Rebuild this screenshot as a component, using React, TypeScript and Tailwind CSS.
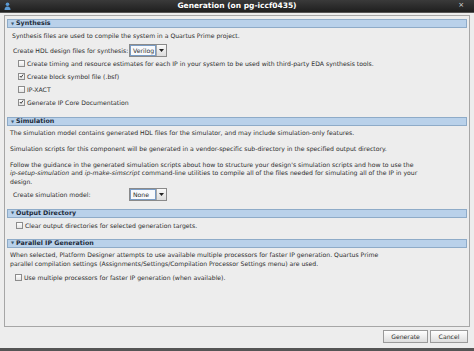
import React from 'react';

const font = { fontFamily: '"DejaVu Sans", "Liberation Sans", sans-serif' };

function SectionHeader({ title }: { title: string }) {
  return (
    <div className="h-[9px] mx-[2px] flex items-center bg-[#b9d1ea] border border-[#8eabc8] pl-[3px]">
      <span className="text-[4px] text-[#3d5a78] mr-[2px] leading-none">▼</span>
      <span className="text-[6.3px] font-bold text-[#1c2a3a] leading-none">{title}</span>
    </div>
  );
}

function Check({ checked, label }: { checked?: boolean; label: string }) {
  return (
    <div className="flex items-center gap-[2px]">
      <div className="w-[7px] h-[7px] border border-[#8c8c8c] bg-gradient-to-b from-[#ffffff] to-[#e4e4e4] flex items-center justify-center">
        {checked && (
          <svg width="6" height="6" viewBox="0 0 6 6">
            <path d="M1 3 L2.5 4.6 L5 1.2" fill="none" stroke="#2a2a2a" strokeWidth="1.1" />
          </svg>
        )}
      </div>
      <span className="whitespace-nowrap">{label}</span>
    </div>
  );
}

function Combo({ value }: { value: string }) {
  return (
    <div className="w-[38px] h-[13px] shrink-0 flex border border-[#8a8a8a] bg-white">
      <div className="flex-1 flex items-center pl-[2px] border border-[#7a9cc4] bg-[#f7f9fc]">{value}</div>
      <div className="w-[10px] flex items-center justify-center bg-gradient-to-b from-[#fafafa] to-[#dcdcdc] border-l border-[#a8a8a8]">
        <svg width="5" height="3" viewBox="0 0 5 3">
          <path d="M0 0 L5 0 L2.5 3 Z" fill="#222" />
        </svg>
      </div>
    </div>
  );
}

function Line({ children, className = '' }: { children: React.ReactNode; className?: string }) {
  return <div className={`h-[8.5px] flex items-center whitespace-nowrap ${className}`}>{children}</div>;
}

export default function App() {
  return (
    <div style={font} className="w-[474px] h-[351px] bg-[#ededed] flex flex-col text-[6.15px] text-[#2c2c2c] overflow-hidden">
      <div className="relative h-[13px] bg-gradient-to-b from-[#3a3a3a] to-[#1f1f1f] border-b border-[#555] flex items-center justify-center">
        <svg className="absolute left-[4px] top-[2px]" width="7" height="8" viewBox="0 0 7 8">
          <circle cx="3.5" cy="2.2" r="1.8" fill="#5b9bd5" />
          <path d="M0.5 8 Q0.5 4.5 3.5 4.5 Q6.5 4.5 6.5 8 Z" fill="#5b9bd5" />
        </svg>
        <span className="text-[7.5px] font-bold text-white leading-none">Generation (on pg-iccf0435)</span>
        <span className="absolute right-[10px] top-[2px] text-[7px] text-[#dddddd] leading-none">×</span>
      </div>

      <div className="px-[4px] pt-[2px]">
        <div className="h-[312px] border border-[#a6a6a6] pt-[3px] flex flex-col">
          <SectionHeader title="Synthesis" />
          <div className="h-[10px] mt-[3px] pl-[7px] flex items-center">
            Synthesis files are used to compile the system in a Quartus Prime project.
          </div>
          <div className="h-[13px] mt-[3px] pl-[8px] flex items-center">
            <span className="w-[116px] shrink-0 whitespace-nowrap">Create HDL design files for synthesis:</span>
            <Combo value="Verilog" />
          </div>
          <div className="pl-[13px]">
            <div className="h-[13px] flex items-center">
              <Check label="Create timing and resource estimates for each IP in your system to be used with third-party EDA synthesis tools." />
            </div>
            <div className="h-[13px] flex items-center">
              <Check checked label="Create block symbol file (.bsf)" />
            </div>
            <div className="h-[13px] flex items-center">
              <Check label="IP-XACT" />
            </div>
            <div className="h-[13px] flex items-center">
              <Check checked label="Generate IP Core Documentation" />
            </div>
          </div>

          <div className="mt-[8px]">
            <SectionHeader title="Simulation" />
          </div>
          <div className="pl-[5px]">
            <Line className="mt-[2px]">
              The simulation model contains generated HDL files for the simulator, and may include simulation-only features.
            </Line>
            <Line className="mt-[7.5px]">
              Simulation scripts for this component will be generated in a vendor-specific sub-directory in the specified output directory.
            </Line>
            <Line className="mt-[7.5px]">
              Follow the guidance in the generated simulation scripts about how to structure your design's simulation scripts and how to use the
            </Line>
            <Line>
              <i>ip-setup-simulation</i>&nbsp;and&nbsp;<i>ip-make-simscript</i>&nbsp;command-line utilities to compile all of the files needed for simulating all of the IP in your
            </Line>
            <Line>design.</Line>
            <div className="h-[14px] mt-[2px] pl-[3px] flex items-center">
              <span className="w-[116px] shrink-0 whitespace-nowrap">Create simulation model:</span>
              <Combo value="None" />
            </div>
          </div>

          <div className="mt-[7px]">
            <SectionHeader title="Output Directory" />
          </div>
          <div className="h-[12px] mt-[2px] pl-[11px] flex items-center">
            <Check label="Clear output directories for selected generation targets." />
          </div>

          <div className="mt-[7px]">
            <SectionHeader title="Parallel IP Generation" />
          </div>
          <div className="pl-[5px] mt-[3px]">
            <Line>
              When selected, Platform Designer attempts to use available multiple processors for faster IP generation. Quartus Prime
            </Line>
            <Line>parallel compilation settings (Assignments/Settings/Compilation Processor Settings menu) are used.</Line>
          </div>
          <div className="h-[12px] mt-[4px] pl-[10px] flex items-center">
            <Check label="Use multiple processors for faster IP generation (when available)." />
          </div>
        </div>
      </div>

      <div className="flex justify-end gap-[2px] pr-[6px] mt-[3px]">
        <button className="w-[45px] h-[13px] border border-[#9a9a9a] bg-gradient-to-b from-[#ffffff] to-[#dedede] text-[6.15px] text-[#2c2c2c] flex items-center justify-center">
          Generate
        </button>
        <button className="w-[38px] h-[13px] border border-[#9a9a9a] bg-gradient-to-b from-[#ffffff] to-[#dedede] text-[6.15px] text-[#2c2c2c] flex items-center justify-center">
          Cancel
        </button>
      </div>
      <div className="flex-1" />
      <div className="h-[3px] bg-[#555555]" />
    </div>
  );
}
